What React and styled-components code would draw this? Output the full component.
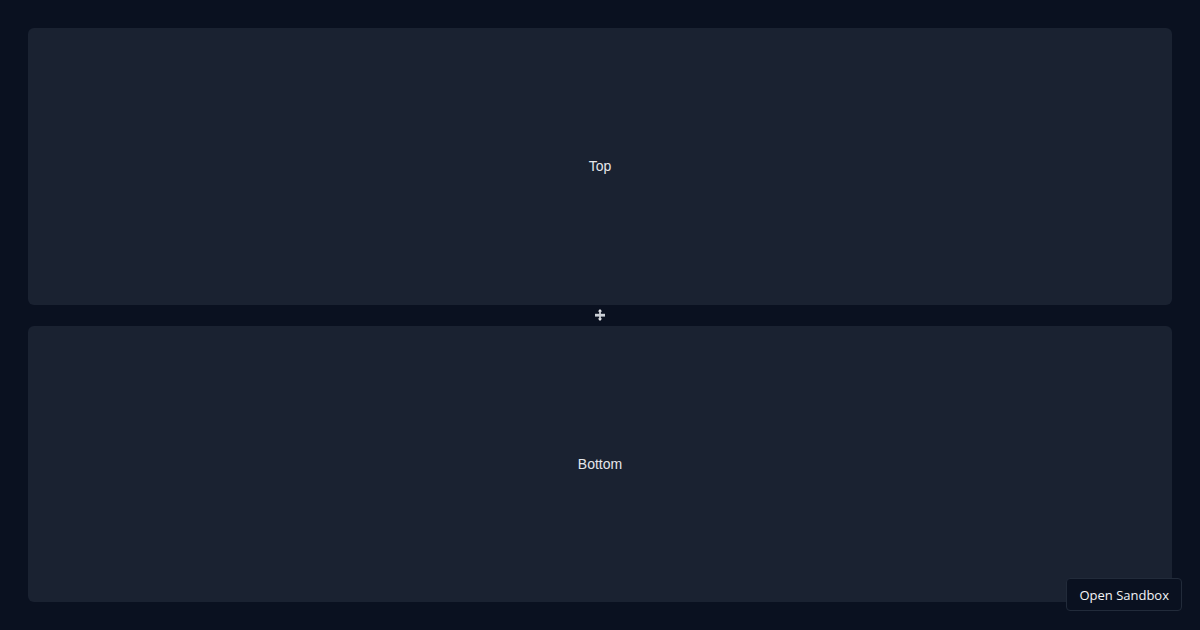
import React from 'react'
import styled, { createGlobalStyle } from 'styled-components'

const GlobalStyle = createGlobalStyle`
  html, body {
    margin: 0;
    padding: 0;
    background: #0a1120;
  }
  * { box-sizing: border-box; }
`

const Page = styled.div`
  width: 1200px;
  height: 630px;
  padding: 28px;
  display: flex;
  flex-direction: column;
  background: #0a1120;
  font-family: 'Liberation Sans', Arial, sans-serif;
`

const Pane = styled.div`
  flex: 1;
  display: flex;
  align-items: center;
  justify-content: center;
  padding-bottom: ${(p) => (p.$lift ? '1px' : '0')};
  background: #1a2231;
  border-radius: 6px;
  color: #e5e7eb;
  font-size: 14px;
`

const Handle = styled.div`
  height: 21px;
  flex: none;
  display: flex;
  align-items: center;
  justify-content: center;
  padding-bottom: 1px;
  cursor: row-resize;
`

const SandboxButton = styled.button`
  position: fixed;
  right: 18px;
  bottom: 19px;
  height: 33px;
  padding: 0 12px;
  background: #0a1120;
  color: #f3f4f6;
  border: 1px solid #222b3a;
  border-radius: 4px;
  font-family: 'Open Sans', 'Noto Sans', sans-serif;
  font-size: 13px;
  font-weight: 500;
`

const GripIcon = () => (
  <svg width="12" height="14" viewBox="0 0 12 14">
    <path d="M6 1 L3.8 3.6 H8.2 Z" fill="#e5e7eb" />
    <rect x="5.2" y="3" width="1.6" height="8" fill="#e5e7eb" />
    <rect x="1" y="5.8" width="10" height="2.8" fill="#cbd0d6" />
    <path d="M6 13 L3.8 10.4 H8.2 Z" fill="#e5e7eb" />
  </svg>
)

export default function App() {
  return (
    <>
      <GlobalStyle />
      <Page>
        <Pane $lift>Top</Pane>
        <Handle>
          <GripIcon />
        </Handle>
        <Pane>Bottom</Pane>
      </Page>
      <SandboxButton>Open Sandbox</SandboxButton>
    </>
  )
}
